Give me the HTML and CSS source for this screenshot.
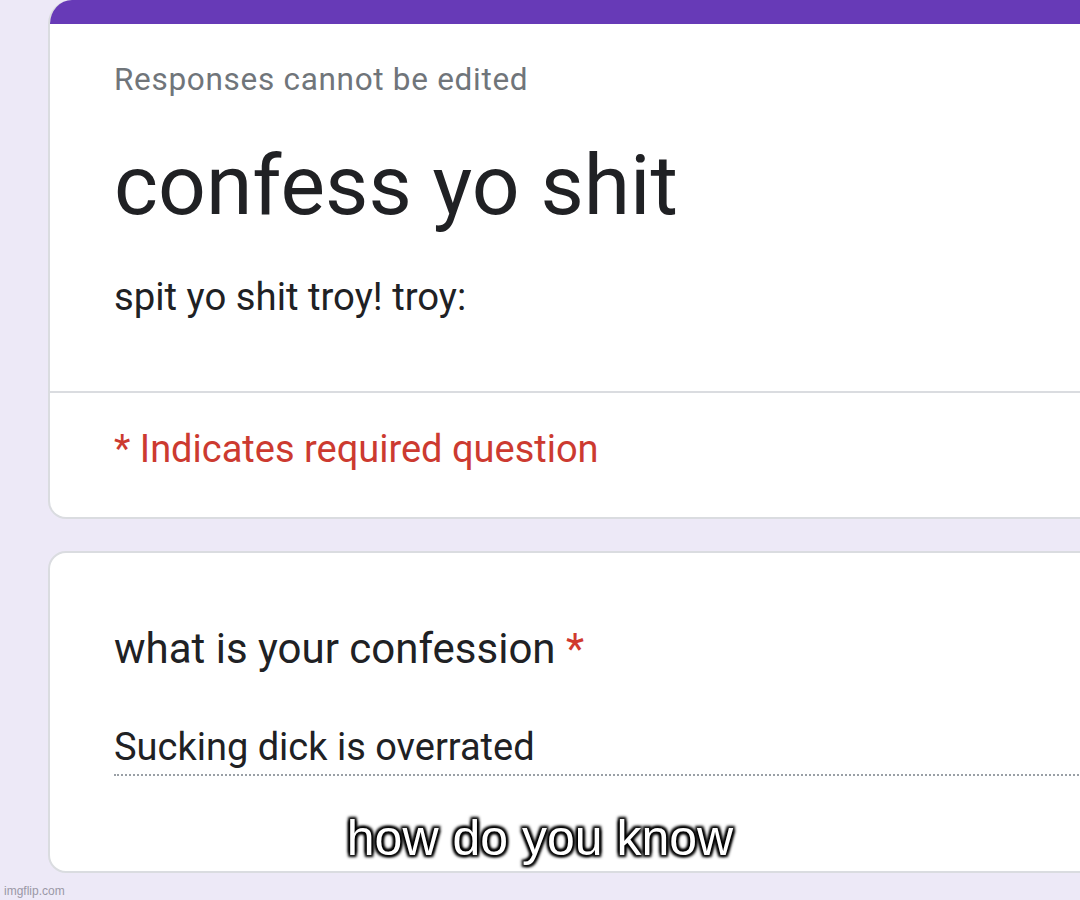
FILE: index.html
```html
<!DOCTYPE html>
<html lang="en">
<head>
<meta charset="utf-8">
<title>confess yo shit</title>
<link rel="stylesheet" href="styles.css">
</head>
<body>
<div class="page">
  <section class="card card-head">
    <div class="accent"></div>
    <div class="head-main">
      <p class="note">Responses cannot be edited</p>
      <h1 class="title">confess yo shit</h1>
      <p class="desc">spit yo shit troy! troy:</p>
    </div>
    <div class="head-req">
      <p class="req">* Indicates required question</p>
    </div>
  </section>
  <section class="card card-q">
    <p class="q">what is your confession <span class="star">*</span></p>
    <div class="answer">Sucking dick is overrated</div>
  </section>
  <div class="watermark">imgflip.com</div>
  <div class="caption">how do you know</div>
</div>
</body>
</html>
```
FILE: styles.css
```css
html, body {
  margin: 0;
  padding: 0;
}
body {
  width: 1080px;
  height: 900px;
  overflow: hidden;
  background: #ede9f7;
  font-family: Roboto, "Noto Sans", Arial, sans-serif;
  color: #202124;
}
.page {
  position: relative;
  width: 1080px;
  height: 900px;
  padding-left: 48px;
  box-sizing: border-box;
  overflow: hidden;
}
.card {
  width: 1100px;
  background: #fff;
  border: 2px solid #dadce0;
  box-sizing: border-box;
}
.card-head {
  border-top: none;
  border-radius: 24px 0 0 18px;
  overflow: hidden;
  height: 519px;
}
.accent {
  height: 24px;
  background: #673ab7;
}
.head-main {
  padding: 36px 0 0 64px;
  height: 369px;
  border-bottom: 2px solid #dadce0;
  box-sizing: border-box;
}
.note {
  margin: 0;
  font-size: 31.5px;
  line-height: 40px;
  letter-spacing: 0.7px;
  color: #70757a;
}
.title {
  margin: 0;
  padding-top: 36px;
  font-weight: 400;
  font-size: 84px;
  line-height: 100px;
  color: #202124;
}
.desc {
  margin: 0;
  padding-top: 37px;
  font-size: 38.3px;
  line-height: 48px;
  color: #202124;
}
.head-req {
  padding: 32px 0 0 64px;
}
.req {
  margin: 0;
  font-size: 38px;
  line-height: 48px;
  color: #cc3a30;
}
.card-q {
  margin-top: 32px;
  height: 322px;
  border-radius: 18px 0 0 18px;
  padding: 70px 0 0 64px;
}
.q {
  margin: 0;
  font-size: 42px;
  line-height: 52px;
  color: #202124;
}
.star {
  color: #d0392e;
}
.answer {
  margin-top: 48px;
  font-size: 38px;
  line-height: 48px;
  color: #202124;
  border-bottom: 2px dotted #9aa0a6;
  padding-bottom: 3px;
}
.watermark {
  position: absolute;
  left: 4px;
  bottom: 2px;
  font-family: "Liberation Sans", Arial, sans-serif;
  font-size: 12px;
  line-height: 14px;
  color: #9a98a6;
}
.caption {
  position: absolute;
  left: 0;
  right: 0;
  top: 808px;
  text-align: center;
  font-family: "Liberation Sans", Arial, sans-serif;
  font-size: 50px;
  line-height: 60px;
  color: #fff;
  text-shadow: 0 0 3px #000, 0 0 3px #000, 2px 2px 3px #000, -2px -2px 3px #000, 2px -2px 3px #000, -2px 2px 3px #000;
}
```
